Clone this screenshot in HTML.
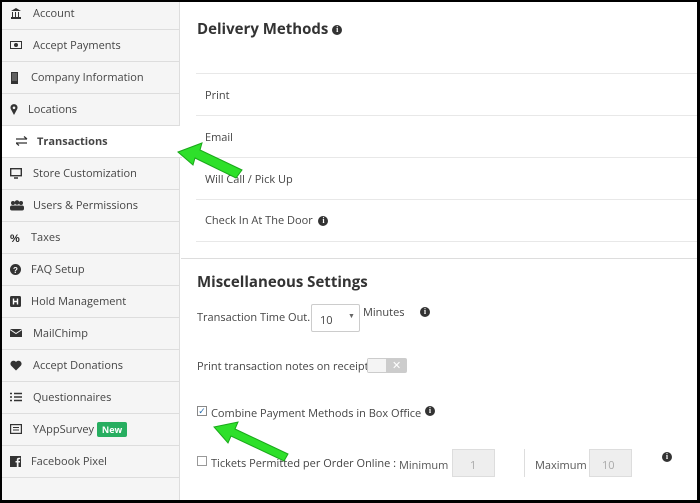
<!DOCTYPE html>
<html><head><style>
*{margin:0;padding:0;box-sizing:border-box}
body{width:700px;height:503px;background:#000;font-family:"Open Sans","Liberation Sans",sans-serif;color:#333;overflow:hidden;position:relative}
#f{position:absolute;left:2px;top:2px;width:695px;height:498px;background:#fff;overflow:hidden}
#sb{position:absolute;left:0;top:0;width:178px;height:498px;background:#f5f5f5;border-right:1px solid #ddd}
.r{position:absolute;left:0;width:178px;height:32px;border-bottom:1px solid #ddd;font-size:11px;line-height:31px;color:#444}
.r svg{position:absolute;left:8px;top:10px}
.r span{position:absolute;left:31px}
.act{background:#fff;width:180px;font-weight:bold}
.ln{position:absolute;height:1px;background:#e8e8e8}
.t{position:absolute;font-size:11px;color:#444;white-space:nowrap}
.info{display:inline-block;width:10px;height:10px;border-radius:50%;background:#333;color:#fff;font-size:8px;line-height:10px;text-align:center;font-weight:bold;font-family:"Liberation Serif",serif;vertical-align:middle}
h2{position:absolute;font-size:15px;font-weight:bold;color:#333}
.box{position:absolute;border:1px solid #ccc;background:#fff}
</style></head><body><div id="f">
<div id="sb">
<div class="r" style="top:-4px"><svg width="12" height="11"><path d="M1 3L6 0L11 3ZM2 4h1v5H2zM5 4h1v5H5zM8 4h1v5H8zM1 9h10v2H1z" fill="#333"/></svg><span>Account</span></div>
<div class="r" style="top:28px"><svg width="12" height="10"><rect x="0.5" y="1.5" width="11" height="7" fill="none" stroke="#333"/><circle cx="6" cy="5" r="2" fill="#333"/></svg><span>Accept Payments</span></div>
<div class="r" style="top:60px"><svg width="10" height="12"><rect x="1" y="0" width="7" height="12" fill="#333"/><path d="M2 2h5M2 4h5M2 6h5M2 8h5" stroke="#aaa" stroke-width="0.8"/></svg><span style="left:29px">Company Information</span></div>
<div class="r" style="top:92px"><svg width="8" height="11"><path d="M4 11L0.8 5A3.5 3.5 0 1 1 7.2 5Z" fill="#333"/><circle cx="4" cy="3.8" r="1.3" fill="#f5f5f5"/></svg><span style="left:26px">Locations</span></div>
<div class="r act" style="top:124px"><svg width="12" height="10" style="left:14px"><path d="M0 3h11M8 0.5L11 3M0 7h11M3 9.5L0 7" stroke="#333" stroke-width="1.2" fill="none"/></svg><span style="left:35px">Transactions</span></div>
<div class="r" style="top:156px"><svg width="12" height="11"><rect x="0.7" y="0.7" width="10.6" height="7" fill="none" stroke="#333" stroke-width="1.4"/><path d="M4 10h4" stroke="#333" stroke-width="1.5"/></svg><span>Store Customization</span></div>
<div class="r" style="top:188px"><svg width="14" height="11"><circle cx="3" cy="3" r="2" fill="#333"/><circle cx="7" cy="2.5" r="2.3" fill="#333"/><circle cx="11" cy="3" r="2" fill="#333"/><rect x="0" y="5.5" width="14" height="5" rx="2" fill="#333"/></svg><span>Users &amp; Permissions</span></div>
<div class="r" style="top:220px"><svg width="11" height="11"><text x="0" y="10" font-size="11" font-weight="bold" font-family="Liberation Sans" fill="#222">%</text></svg><span style="left:29px">Taxes</span></div>
<div class="r" style="top:252px"><svg width="11" height="11"><circle cx="5.5" cy="5.5" r="5.5" fill="#333"/><text x="3" y="9" font-size="8" font-weight="bold" font-family="Liberation Sans" fill="#fff">?</text></svg><span style="left:29px">FAQ Setup</span></div>
<div class="r" style="top:284px"><svg width="11" height="11"><rect width="11" height="11" rx="1.5" fill="#333"/><path d="M3.5 2.5v6M7.5 2.5v6M3.5 5.5h4" stroke="#fff" stroke-width="1.4"/></svg><span style="left:29px">Hold Management</span></div>
<div class="r" style="top:316px"><svg width="12" height="10"><rect y="1" width="12" height="8" fill="#333"/><path d="M0 1.5L6 5.5L12 1.5" stroke="#f5f5f5" fill="none"/></svg><span>MailChimp</span></div>
<div class="r" style="top:348px"><svg width="12" height="11"><path d="M6 10.5L1 5.5A2.8 2.8 0 0 1 6 2A2.8 2.8 0 0 1 11 5.5Z" fill="#333"/></svg><span>Accept Donations</span></div>
<div class="r" style="top:380px"><svg width="12" height="10"><path d="M0 1.5h2M4 1.5h8M0 5h2M4 5h8M0 8.5h2M4 8.5h8" stroke="#333" stroke-width="1.6"/></svg><span>Questionnaires</span></div>
<div class="r" style="top:412px"><svg width="12" height="10"><rect x="0.6" y="0.6" width="10.8" height="8.8" fill="none" stroke="#333" stroke-width="1.2"/><path d="M3 3.5h6M3 6h6" stroke="#333"/></svg><span>YAppSurvey <b style="background:#27ae60;color:#fff;font-size:9px;padding:1px 5px;border-radius:2px">New</b></span></div>
<div class="r" style="top:444px"><svg width="11" height="11"><rect width="11" height="11" fill="#333"/><path d="M8.5 11V6.5h1.5V5H8.5V4c0-.6.3-.8.9-.8h.8V1.8H9c-1.5 0-2.2.8-2.2 2V5H5.5v1.5h1.3V11" fill="#f5f5f5"/></svg><span style="left:29px">Facebook Pixel</span></div>
</div>
<h2 style="left:195px;top:17px">Delivery Methods <span class="info">i</span></h2>
<div class="ln" style="left:194px;top:71px;width:501px"></div>
<div class="t" style="left:203px;top:86px">Print</div>
<div class="ln" style="left:194px;top:113px;width:501px"></div>
<div class="t" style="left:203px;top:128px">Email</div>
<div class="ln" style="left:194px;top:155px;width:501px"></div>
<div class="t" style="left:203px;top:170px">Will Call / Pick Up</div>
<div class="ln" style="left:194px;top:197px;width:501px"></div>
<div class="t" style="left:203px;top:211px">Check In At The Door &nbsp;<span class="info">i</span></div>
<div class="ln" style="left:194px;top:239px;width:501px"></div>
<div class="ln" style="left:179px;top:256px;width:516px;background:#ddd"></div>
<h2 style="left:195px;top:270px">Miscellaneous Settings</h2>
<div class="t" style="left:195px;top:308px">Transaction Time Out.</div>
<div class="box" style="left:309px;top:302px;width:49px;height:28px;border-radius:2px"><span class="t" style="left:8px;top:8px">10</span><span style="position:absolute;left:36px;top:7px;font-size:7px;color:#666">&#9660;</span></div>
<div class="t" style="left:361px;top:303px">Minutes</div>
<div class="info" style="position:absolute;left:418px;top:305px">i</div>
<div class="t" style="left:195px;top:357px">Print transaction notes on receipt</div>
<div style="position:absolute;left:365px;top:356px;width:40px;height:15px;background:#ccc;border-radius:2px"><div style="position:absolute;left:1px;top:1px;width:18px;height:13px;background:#f4f4f4"></div><span style="position:absolute;left:25px;top:0;color:#fff;font-size:11px;line-height:15px">&#10005;</span></div>
<div class="box" style="left:195px;top:404px;width:10px;height:10px;border-color:#888;font-size:9px;line-height:8px;color:#2a6fb0;text-align:center">&#10003;</div>
<div class="t" style="left:209px;top:404px">Combine Payment Methods in Box Office</div>
<div class="info" style="position:absolute;left:423px;top:404px">i</div>
<div class="box" style="left:195px;top:454px;width:10px;height:10px;border-color:#999"></div>
<div class="t" style="left:209px;top:454px">Tickets Permitted per Order Online :</div>
<div class="t" style="left:397px;top:456px;color:#555">Minimum</div>
<div class="box" style="left:450px;top:447px;width:43px;height:28px;background:#eee;border-color:#ddd"><span class="t" style="left:17px;top:8px;color:#aaa">1</span></div>
<div class="ln" style="left:522px;top:447px;width:1px;height:28px;background:#ddd"></div>
<div class="t" style="left:533px;top:456px;color:#555">Maximum</div>
<div class="box" style="left:587px;top:447px;width:43px;height:28px;background:#eee;border-color:#ddd"><span class="t" style="left:12px;top:8px;color:#aaa">10</span></div>
<div class="info" style="position:absolute;left:660px;top:450px">i</div>
<svg style="position:absolute;left:0;top:0" width="695" height="498">
<polygon points="176,150 200,141 198,148 240,168 234,176 193,156 191,163" fill="#2ee02a" stroke="#1aa81a" stroke-width="1"/>
<polygon points="212,425 236,420 233,427 286,452 282,459 229,434 226,441" fill="#2ee02a" stroke="#1aa81a" stroke-width="1"/>
</svg>
</div></body></html>
